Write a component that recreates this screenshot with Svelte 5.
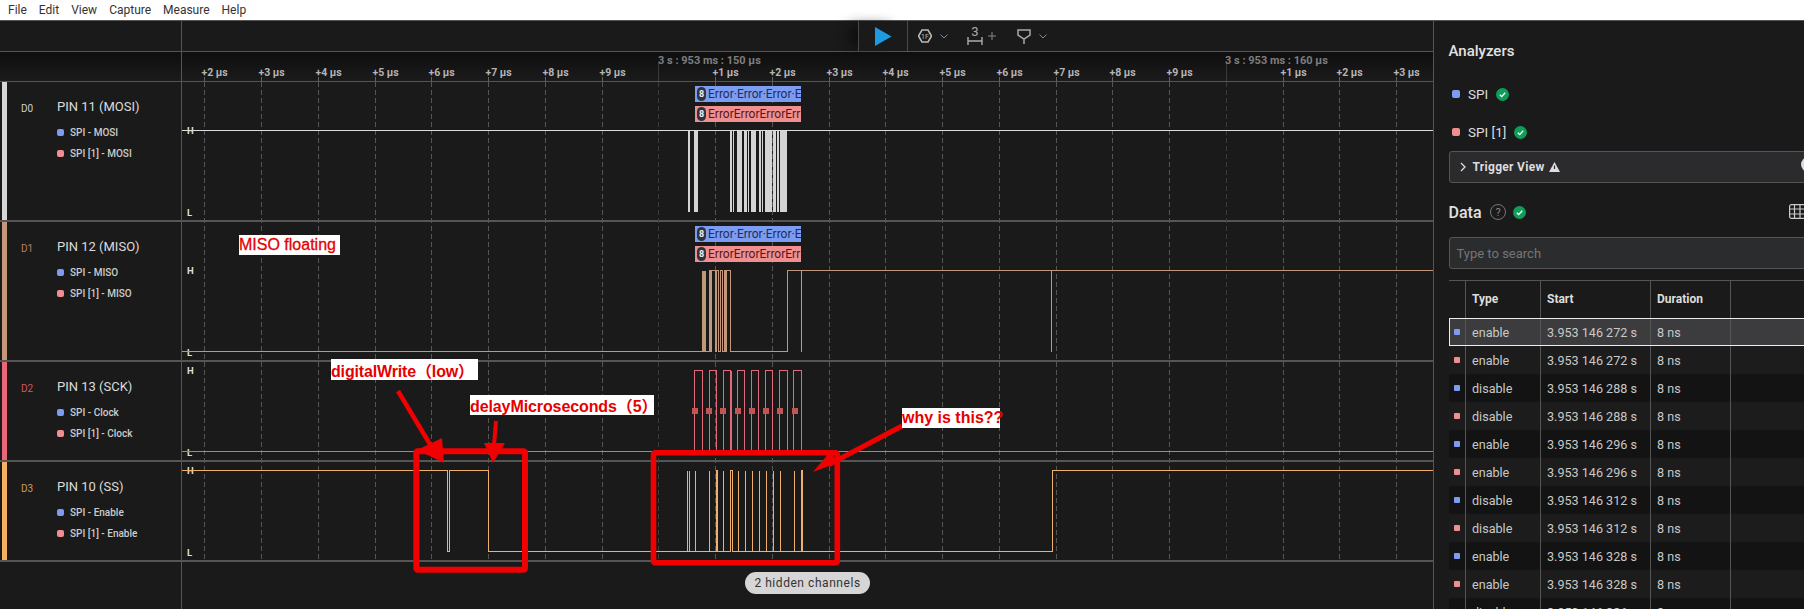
<script lang="ts">
  const menu = ['File', 'Edit', 'View', 'Capture', 'Measure', 'Help'];

  const TICK0 = 204.4;
  const STEP = 56.75;
  const ticks = Array.from({ length: 22 }, (_, i) => {
    const x = Math.round(TICK0 + i * STEP) + 0.5;
    let label = '';
    if (i < 8) label = `+${i + 2} µs`;
    else if (i > 8 && i < 18) label = `+${i - 8} µs`;
    else if (i > 18) label = `+${i - 18} µs`;
    return { x, label, major: i === 8 || i === 18 };
  });

  // toggles between high and low at each x
  function wave(edges: number[], hi: number, lo: number, startHigh: boolean, endX = 1433) {
    let high = startHigh;
    let d = `M182 ${high ? hi : lo}`;
    for (const x of edges) {
      d += ` H${x} V${high ? lo : hi}`;
      high = !high;
    }
    return d + ` H${endX}`;
  }

  function solid(from: number, to: number) {
    const out: number[] = [];
    for (let x = from; x <= to; x++) out.push(x + 0.5, x + 0.5);
    return out;
  }

  const d0Blocks = [[688, 690], [694, 698], [730, 732], [733, 734], [737, 742], [744, 747], [748, 749], [751, 756], [759, 761], [762, 763], [765, 772], [773, 776], [777, 779], [780, 787]];

  const d1Edges = [...solid(702, 705), 709.5, 710.5, 711.5, 715.5, 716.5, 718.5, 720.5, 722.5, 724.5, 725.5, 726.5, 730.5, 787.5, 801.5, 801.5, 1051.5, 1051.5];
  const d2Edges = [694.5, 702.5, 709.5, 716.5, 723.5, 730.5, 731.5, 731.5, 737.5, 744.5, 751.5, 758.5, 765.5, 772.5, 779.5, 787.5, 793.5, 801.5];
  const d3Edges = [447.5, 449.5, 488.5, 687.5, 687.5, 689.5, 689.5, 695.5, 695.5, 709.5, 709.5, 716.5, 717.5, 723.5, 723.5, 730.5, 732.5, 738.5, 738.5, 745.5, 745.5, 752.5, 752.5, 759.5, 759.5, 766.5, 766.5, 773.5, 773.5, 780.5, 780.5, 794.5, 794.5, 801.5, 802.5, 1052.5];

  const clockDots = [695, 709, 723, 738, 752, 766, 780, 795];

  const bubbles = [
    { top: 65, kind: 'blue', text: 'Error·Error·Error·E' },
    { top: 85, kind: 'red', text: 'ErrorErrorErrorErr' },
    { top: 205, kind: 'blue', text: 'Error·Error·Error·E' },
    { top: 225, kind: 'red', text: 'ErrorErrorErrorErr' }
  ];

  const channels = [
    { id: 'D0', name: 'PIN 11 (MOSI)', sub: 'MOSI', color: '#d6d6d6', text: '#cfcfcf', cls: 'tall' },
    { id: 'D1', name: 'PIN 12 (MISO)', sub: 'MISO', color: '#c3977c', text: '#b5805f', cls: 'tall' },
    { id: 'D2', name: 'PIN 13 (SCK)', sub: 'Clock', color: '#ea6678', text: '#d9535f', cls: 'short' },
    { id: 'D3', name: 'PIN 10 (SS)', sub: 'Enable', color: '#f3b163', text: '#d29a55', cls: 'short' }
  ];

  const levels = [
    { h: 130, l: 212 },
    { h: 270, l: 352 },
    { h: 370, l: 452 },
    { h: 470, l: 552 }
  ];

  const rows = [
    ['enable', '272'], ['enable', '272'], ['disable', '288'], ['disable', '288'],
    ['enable', '296'], ['enable', '296'], ['disable', '312'], ['disable', '312'],
    ['enable', '328'], ['enable', '328'], ['disable', '336']
  ];
</script>

<div class="app">
  <div class="menu">
    {#each menu as m}<span>{m}</span>{/each}
  </div>

  <div class="main">
    <div class="capture">
      <div class="toolbar">
        <div class="left-gap"></div>
        <div class="play">
          <svg width="17" height="19" viewBox="0 0 17 19"><path d="M0 0 L16.5 9.5 L0 19 Z" fill="#1e9be0" /></svg>
        </div>
        <div class="tools">
          <svg class="t-hex" width="14" height="14" viewBox="0 0 14 14" fill="none" stroke="#bbb">
            <path d="M4 1 H10 L13.5 7 L10 13 H4 L0.5 7 Z" stroke-width="1.5" />
            <text x="7" y="9.6" text-anchor="middle" class="hex-text">1F</text>
          </svg>
          <svg class="chev" width="8" height="5" viewBox="0 0 8 5" fill="none" stroke="#888"><path d="M0.5 0.5 L4 4 L7.5 0.5" /></svg>
          <div class="measure">
            <span class="three">3</span>
            <svg width="16" height="8" viewBox="0 0 16 8" fill="none" stroke="#aaa" stroke-width="1.4"><path d="M1 0 V8 M15 0 V8 M1 4 H15" /></svg>
          </div>
          <svg class="plus" width="8" height="8" viewBox="0 0 8 8" stroke="#888"><path d="M4 0 V8 M0 4 H8" /></svg>
          <svg class="flag" width="14" height="15" viewBox="0 0 14 15" fill="none" stroke="#aaa" stroke-width="1.5"><path d="M1 1 H13 V6 L7 10 L1 6 Z M7 10 V15" /></svg>
          <svg class="chev" width="8" height="5" viewBox="0 0 8 5" fill="none" stroke="#888"><path d="M0.5 0.5 L4 4 L7.5 0.5" /></svg>
        </div>
      </div>

      <div class="ruler"></div>

      {#each channels as c}
        <div class="channel {c.cls}">
          <div class="strip" style="background: {c.color}"></div>
          <div class="ch-id" style="color: {c.text}">{c.id}</div>
          <div class="ch-info">
            <div class="ch-name">{c.name}</div>
            <div class="ch-sub"><i class="dot blue"></i>SPI - {c.sub}</div>
            <div class="ch-sub"><i class="dot red"></i>SPI [1] - {c.sub}</div>
          </div>
        </div>
      {/each}

      <!-- time axis and traces -->
      <svg class="canvas" width="1433" height="588" viewBox="0 21 1433 588" shape-rendering="crispEdges">
        <path d="M181.5 21 V609" stroke="#555" />
        {#each ticks as t}
          <path d="M{t.x} {t.major ? 63 : 77} V81" stroke={t.major ? '#3a3a3a' : '#666'} />
          <path d="M{t.x} 82 V560" stroke={t.major ? '#3c3c3c' : '#565656'} stroke-dasharray="5 3" />
          {#if t.label}
            <text x={t.x - 3} y="76" class="tick">{t.label}</text>
          {/if}
        {/each}
        <text x="658" y="64" class="stamp">3 s : 953 ms : 150 µs</text>
        <text x="1225" y="64" class="stamp">3 s : 953 ms : 160 µs</text>

        {#each levels as lv}
          <text x="187" y={lv.h + 4} class="lvl">H</text>
          <text x="187" y={lv.l + 4} class="lvl">L</text>
        {/each}

        <path d="M182 130.5 H1433" stroke="#dcdcdc" />
        {#each d0Blocks as b}
          <rect x={b[0]} y="131" width={b[1] - b[0]} height="81" fill="#d4d4d4" />
        {/each}
        <path d={wave(d1Edges, 270.5, 351.5, false)} stroke="#c3977c" fill="none" />
        <path d={wave(d2Edges, 370.5, 451.5, false)} stroke="#e0697a" fill="none" />
        {#each clockDots as x}
          <rect x={x - 3} y="408" width="6" height="6" fill="#c4544f" />
        {/each}
        <path d={wave(d3Edges, 470.5, 551.5, true)} stroke="#eeb06c" fill="none" />
      </svg>

      {#each bubbles as b}
        <div class="bubble {b.kind}" style="top: {b.top}px">
          <span class="count">8</span><span class="btext">{b.text}</span>
        </div>
      {/each}

      <!-- markup drawn on top of the screenshot -->
      <svg class="marks" width="1433" height="609" viewBox="0 0 1433 609" fill="none">
        <rect x="416.3" y="451.3" width="108.7" height="118.5" rx="1.5" stroke="#f00000" stroke-width="6" />
        <rect x="653.5" y="452.8" width="183.8" height="110" rx="1.5" stroke="#f00000" stroke-width="5.6" />
        <path d="M398 391 L434 451" stroke="#f00000" stroke-width="4.5" />
        <path d="M444 463 L442 438 L417 450 Z" fill="#f00000" />
        <path d="M496 421 L494 445" stroke="#f00000" stroke-width="4" />
        <path d="M493 463 L484 443 L505 443 Z" fill="#f00000" />
        <path d="M902 426 L828 465" stroke="#f00000" stroke-width="5" />
        <path d="M813 472 L830 452 L839 462 Z" fill="#f00000" />
      </svg>
      <div class="note note-miso">MISO floating</div>
      <div class="note note-write">digitalWrite（low）</div>
      <div class="note note-delay">delayMicroseconds（5）</div>
      <div class="note note-why">why is this??</div>

      <div class="pill">2 hidden channels</div>
    </div>

    <aside class="panel">
      <h3 class="h-analyzers">Analyzers</h3>
      <div class="an-row"><i class="dot blue big"></i>SPI<svg class="ok" width="13" height="13" viewBox="0 0 13 13"><circle cx="6.5" cy="6.5" r="6.5" fill="#0f9d58" /><path d="M3.8 6.8 L5.7 8.6 L9.2 4.8" fill="none" stroke="#fff" stroke-width="1.4" /></svg></div>
      <div class="an-row"><i class="dot red big"></i>SPI [1]<svg class="ok" width="13" height="13" viewBox="0 0 13 13"><circle cx="6.5" cy="6.5" r="6.5" fill="#0f9d58" /><path d="M3.8 6.8 L5.7 8.6 L9.2 4.8" fill="none" stroke="#fff" stroke-width="1.4" /></svg></div>

      <div class="trigger">
        <svg width="6" height="10" viewBox="0 0 6 10" fill="none" stroke="#ddd" stroke-width="1.3"><path d="M1 1 L5 5 L1 9" /></svg>
        <span>Trigger View</span>
        <svg width="11" height="10" viewBox="0 0 11 10"><path d="M5.5 0 L11 10 H0 Z" fill="#ddd" /><path d="M5.5 3.5 V7" stroke="#2a2b2e" stroke-width="1.2" /></svg>
        <i class="knob"></i>
      </div>

      <div class="data-head">
        <h3>Data</h3>
        <svg width="16" height="16" viewBox="0 0 16 16" fill="none"><circle cx="8" cy="8" r="7.5" stroke="#777" /><text x="8" y="12" text-anchor="middle" class="q">?</text></svg>
        <svg class="ok" width="13" height="13" viewBox="0 0 13 13"><circle cx="6.5" cy="6.5" r="6.5" fill="#0f9d58" /><path d="M3.8 6.8 L5.7 8.6 L9.2 4.8" fill="none" stroke="#fff" stroke-width="1.4" /></svg>
        <svg class="grid-icon" width="16" height="15" viewBox="0 0 16 15" fill="none" stroke="#ccc" stroke-width="1.2"><rect x="0.6" y="0.6" width="16" height="13.8" rx="2" /><path d="M0 5 H16 M0 10 H16 M5.5 0 V15 M11 0 V15" /></svg>
      </div>

      <div class="search">Type to search</div>

      <div class="table">
        <div class="tr head">
          <div class="c0"></div><div class="c1">Type</div><div class="c2">Start</div><div class="c3">Duration</div><div class="c4"></div>
        </div>
        {#each rows as r, i}
          <div class="tr" class:selected={i === 0} class:odd={i % 2 === 0 && i > 0}>
            <div class="c0"><i class="sq" class:blue={i % 2 === 0} class:red={i % 2 === 1}></i></div>
            <div class="c1">{r[0]}</div>
            <div class="c2">3.953 146 {r[1]} s</div>
            <div class="c3">8 ns</div>
            <div class="c4"></div>
          </div>
        {/each}
      </div>
    </aside>
  </div>
</div>

<style>
  :global(body) {
    margin: 0;
    background: #1a1a1a;
  }

  .app {
    width: 1804px;
    height: 609px;
    overflow: hidden;
    display: flex;
    flex-direction: column;
    font-family: Roboto, sans-serif;
    color: #ccc;
  }

  .menu {
    height: 20px;
    flex-shrink: 0;
    background: #fff;
    border-bottom: 1px solid #555;
    display: flex;
    align-items: center;
    gap: 12px;
    padding-left: 8px;
    font: 12px Roboto, sans-serif;
    color: #333;
  }

  .main {
    flex: 1;
    display: flex;
    min-height: 0;
  }

  .capture {
    width: 1433px;
    flex-shrink: 0;
    position: relative;
    display: flex;
    flex-direction: column;
    background: #1a1a1a;
  }

  .toolbar {
    height: 30px;
    flex-shrink: 0;
    border-bottom: 1px solid #555;
    display: flex;
  }

  .left-gap {
    width: 858px;
  }

  .play {
    width: 48px;
    border: solid #4a4a4a;
    border-width: 0 1px;
    display: flex;
    align-items: center;
    justify-content: center;
    box-shadow: -14px 0 14px -6px #0c0c0c;
  }

  .tools {
    display: flex;
    align-items: center;
    padding-left: 10px;
  }

  .hex-text {
    font: 7px Roboto, sans-serif;
    fill: #bbb;
    stroke: none;
  }

  .chev {
    margin-left: 8px;
  }

  .measure {
    margin-left: 19px;
    width: 16px;
    display: flex;
    flex-direction: column;
    align-items: center;
    margin-top: -2px;
  }

  .three {
    font-size: 13px;
    line-height: 11px;
    color: #aaa;
  }

  .plus {
    margin-left: 5px;
  }

  .flag {
    margin-left: 21px;
  }

  .ruler {
    height: 29px;
    flex-shrink: 0;
    border-bottom: 1px solid #555;
    background: linear-gradient(#0e0e0e, #1b1b1b);
  }

  .channel {
    display: flex;
    border-bottom: 2px solid #555;
    flex-shrink: 0;
  }

  .channel.tall {
    height: 138px;
  }

  .channel.short {
    height: 98px;
  }

  .strip {
    width: 5px;
    margin-left: 2px;
  }

  .ch-id {
    width: 36px;
    margin-left: 14px;
    font-size: 10px;
    padding-top: 21px;
    line-height: 12px;
  }

  .ch-info {
    padding-top: 17px;
  }

  .ch-name {
    font-size: 13px;
    line-height: 16px;
    color: #dcdcdc;
    margin-bottom: 11.5px;
  }

  .ch-sub {
    font-size: 10px;
    font-weight: 500;
    line-height: 12px;
    margin-bottom: 9px;
    display: flex;
    align-items: center;
    white-space: nowrap;
  }

  .dot {
    width: 7px;
    height: 7px;
    border-radius: 2px;
    margin-right: 6px;
    flex-shrink: 0;
  }

  .blue {
    background: #7b9cf0;
  }

  .red {
    background: #f08f8f;
  }

  .canvas {
    position: absolute;
    left: 0;
    top: 0;
    pointer-events: none;
  }

  .tick {
    font: 700 10.5px Roboto, sans-serif;
    fill: #b4b4b4;
  }

  .stamp {
    font: 700 11px Roboto, sans-serif;
    fill: #7e7e7e;
  }

  .lvl {
    font: 700 9.5px Roboto, sans-serif;
    fill: #ddd;
  }

  .bubble {
    position: absolute;
    left: 695px;
    width: 106px;
    height: 16px;
    display: flex;
    align-items: center;
    overflow: hidden;
    font-size: 12px;
    white-space: nowrap;
  }

  .bubble.blue {
    color: #1d2c5c;
  }

  .bubble.red {
    color: #5a1418;
  }

  .count {
    width: 9px;
    height: 14px;
    margin-left: 2px;
    margin-right: 2px;
    border-radius: 5px;
    background: #2c3240;
    color: #eee;
    font-size: 9px;
    font-weight: 700;
    text-align: center;
    line-height: 14px;
    flex-shrink: 0;
  }

  .marks {
    position: absolute;
    left: 0;
    top: -21px;
    pointer-events: none;
  }

  .note {
    position: absolute;
    background: #fff;
    color: #e60000;
    font-family: "Liberation Sans", "Noto Sans CJK SC", sans-serif;
    font-size: 16px;
    font-weight: 700;
    white-space: nowrap;
    display: flex;
    align-items: center;
  }

  .note-miso {
    left: 239px;
    top: 214px;
    width: 101px;
    height: 20px;
    font-weight: 400;
    font-size: 16px;
    -webkit-text-stroke: 0.3px #e60000;
  }

  .note-write {
    left: 331px;
    top: 338px;
    width: 147px;
    height: 21px;
    letter-spacing: -0.15px;
  }

  .note-delay {
    left: 470px;
    top: 374px;
    width: 184px;
    height: 20px;
    letter-spacing: -0.1px;
  }

  .note-why {
    left: 902px;
    top: 387px;
    width: 98px;
    height: 20px;
  }

  .pill {
    position: absolute;
    left: 745px;
    top: 551px;
    width: 125px;
    height: 22px;
    border-radius: 11px;
    background: #d6d6d6;
    color: #333;
    font-size: 12px;
    letter-spacing: 0.55px;
    line-height: 22px;
    text-align: center;
  }

  .panel {
    flex: 1;
    min-width: 0;
    border-left: 1px solid #555;
    padding-left: 14.5px;
    background: #1a1a1a;
  }

  h3 {
    margin: 0;
    font-weight: 500;
    color: #e2e2e2;
  }

  .h-analyzers {
    font-size: 15px;
    line-height: 20px;
    padding-top: 20px;
    margin-bottom: 14px;
  }

  .an-row {
    height: 38px;
    display: flex;
    align-items: center;
    font-size: 13.5px;
    color: #ddd;
    padding-left: 3px;
  }

  .dot.big {
    width: 8px;
    height: 8px;
    margin-right: 8.5px;
  }

  .ok {
    margin-left: 8px;
    flex-shrink: 0;
  }

  .trigger {
    height: 30px;
    width: 400px;
    background: #2b2b2e;
    border: 1px solid #555;
    border-radius: 3px;
    display: flex;
    align-items: center;
    padding-left: 10px;
    font-size: 12px;
    font-weight: 700;
    letter-spacing: 0.3px;
    color: #ddd;
    position: relative;
  }

  .trigger span {
    margin: 0 4px 0 7px;
  }

  .knob {
    position: absolute;
    left: 351px;
    top: 5px;
    width: 15px;
    height: 15px;
    background: #ddd;
    border-radius: 50%;
  }

  .data-head {
    height: 30px;
    margin-top: 14px;
    display: flex;
    align-items: center;
    gap: 7px;
    position: relative;
  }

  .data-head h3 {
    font-size: 16px;
    margin-right: 1px;
  }

  .q {
    font: 11px Roboto, sans-serif;
    fill: #888;
  }

  .data-head .ok {
    margin-left: 0;
  }

  .grid-icon {
    position: absolute;
    left: 340.5px;
    top: 7px;
  }

  .search {
    margin-top: 10px;
    height: 30px;
    width: 400px;
    background: #2b2c2e;
    border: 1px solid #555;
    border-radius: 3px;
    padding-left: 7px;
    line-height: 31px;
    font-size: 13px;
    color: #757575;
  }

  .table {
    margin-top: 11px;
    border-top: 1px solid #555;
    width: 400px;
  }

  .tr {
    display: flex;
    height: 28px;
    align-items: center;
    font-size: 12.6px;
    color: #c8c8c8;
    box-sizing: border-box;
    background: #1c1c1c;
    line-height: 29px;
  }

  .tr.odd {
    background: #131313;
  }

  .tr.head {
    height: 37px;
    line-height: 36px;
    font-size: 12px;
    font-weight: 700;
    color: #ddd;
    background: #1a1a1a;
  }

  .tr.selected {
    background: #3c3c3e;
    outline: 1px solid #eee;
    outline-offset: -1px;
  }

  .tr > div {
    height: 100%;
    box-sizing: border-box;
    border-right: 1px solid #555;
    padding-left: 6.5px;
    white-space: nowrap;
  }

  .c0 {
    width: 17px;
    display: flex;
    align-items: center;
    padding-left: 5.5px !important;
  }

  .c1 {
    width: 75px;
  }

  .c2 {
    width: 110px;
  }

  .c3 {
    width: 80px;
  }

  .c4 {
    flex: 1;
    border-right: 0 !important;
  }

  .sq {
    width: 6px;
    height: 6px;
    border-radius: 1px;
  }
</style>
